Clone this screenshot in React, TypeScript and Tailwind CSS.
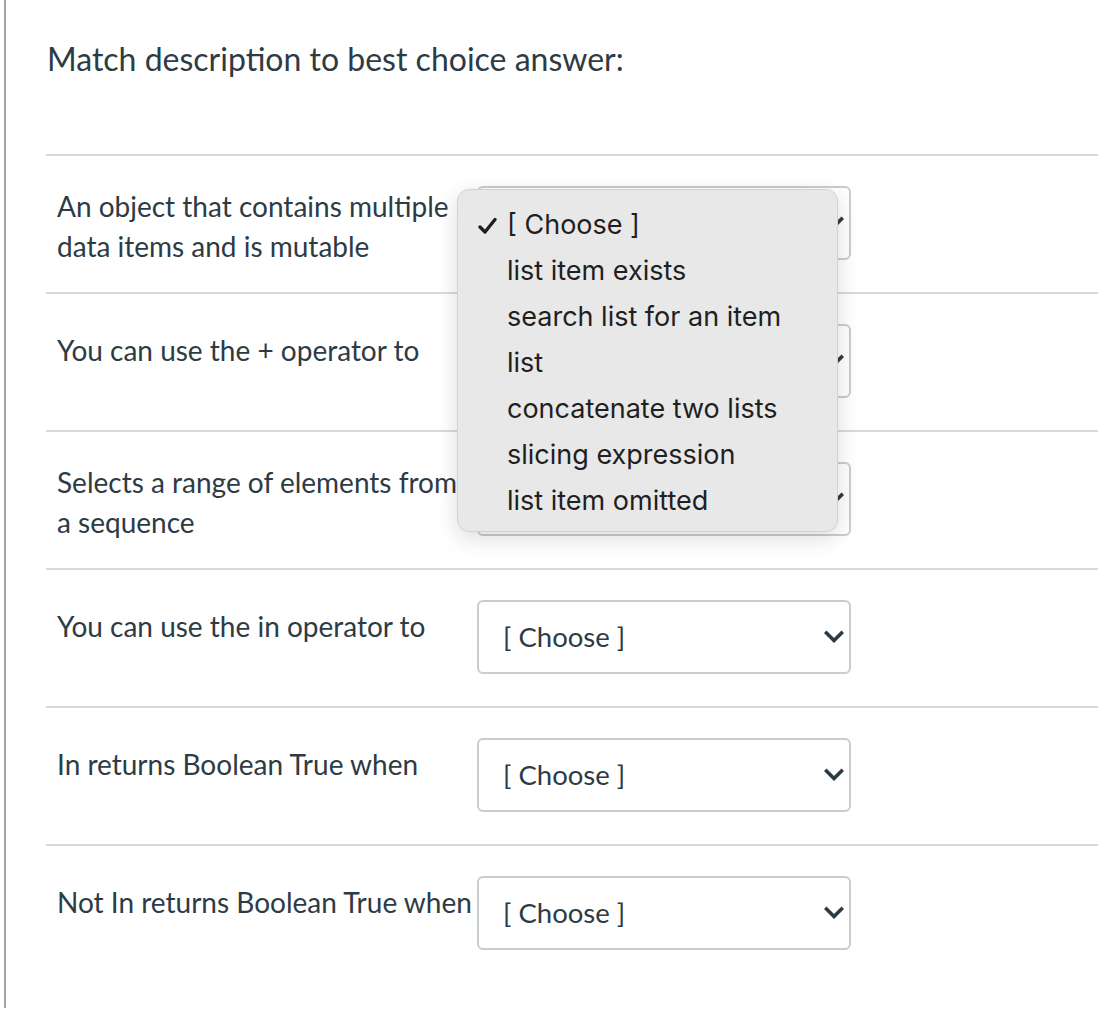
import React from "react"

const rows = [
  { lines: ["An object that contains multiple", "data items and is mutable"], pad: "pt-[30px]" },
  { lines: ["You can use the + operator to"], pad: "pt-[36px]" },
  { lines: ["Selects a range of elements from", "a sequence"], pad: "pt-[30px]" },
  { lines: ["You can use the in operator to"], pad: "pt-[36px]" },
  { lines: ["In returns Boolean True when"], pad: "pt-[36px]" },
  { lines: ["Not In returns Boolean True when"], pad: "pt-[36px]" },
]

const options = [
  "[ Choose ]",
  "list item exists",
  "search list for an item",
  "list",
  "concatenate two lists",
  "slicing expression",
  "list item omitted",
]

function Chevron() {
  return (
    <svg width="20" height="14" viewBox="0 0 20 14" className="shrink-0">
      <polyline points="2.5,3 10,10.5 17.5,3" fill="none" stroke="#2d3b45" strokeWidth="3.6" strokeLinecap="square" />
    </svg>
  )
}

function Select() {
  return (
    <div className="mt-[30px] flex h-[74px] w-[374px] shrink-0 items-center justify-between rounded-[6px] border-2 border-[#c7cdd1] bg-white pl-[24px] pr-[5px]">
      <span className="text-[27.5px] leading-none text-[#2d3b45]">[ Choose ]</span>
      <Chevron />
    </div>
  )
}

function Popup() {
  return (
    <div className="absolute left-[457px] top-[189px] w-[381px] h-[343px] rounded-[12px] border border-[#d2d2d2] bg-[#e8e8e8] pt-[12px] shadow-[0_6px_22px_rgba(0,0,0,0.14)] font-['Inter','Liberation_Sans',sans-serif]">
      {options.map((o, i) => (
        <div key={o} className="relative flex h-[46px] items-center pl-[49px] text-[27px] whitespace-nowrap text-[#1f1f1f]">
          {i === 0 && (
            <svg width="20" height="18" viewBox="0 0 20 18" className="absolute left-[20px] top-[15px]">
              <polyline points="2,10 7,15 17,2.5" fill="none" stroke="#1f1f1f" strokeWidth="3.3" strokeLinecap="round" strokeLinejoin="round" />
            </svg>
          )}
          {o}
        </div>
      ))}
    </div>
  )
}

export default function App() {
  return (
    <div className="relative min-h-[1010px] bg-white font-['Lato','Liberation_Sans',sans-serif] text-[#2d3b45]">
      <div className="pl-[4px]">
        <div className="min-h-[1008px] border-l-2 border-[#a6a6a6] pl-[40px]">
          <h1 className="pt-[41px] pb-[77px] pl-[1px] text-[32px] leading-[36px] font-normal">
            Match description to best choice answer:
          </h1>
          {rows.map((r) => (
            <div key={r.lines[0]} className="flex h-[138px] border-t-2 border-[#d7dadc]">
              <div className={`w-[431px] shrink-0 pl-[11px] text-[28px] leading-[40px] whitespace-nowrap ${r.pad}`}>
                {r.lines.map((l) => (
                  <div key={l}>{l}</div>
                ))}
              </div>
              <Select />
            </div>
          ))}
        </div>
      </div>
      <Popup />
    </div>
  )
}
